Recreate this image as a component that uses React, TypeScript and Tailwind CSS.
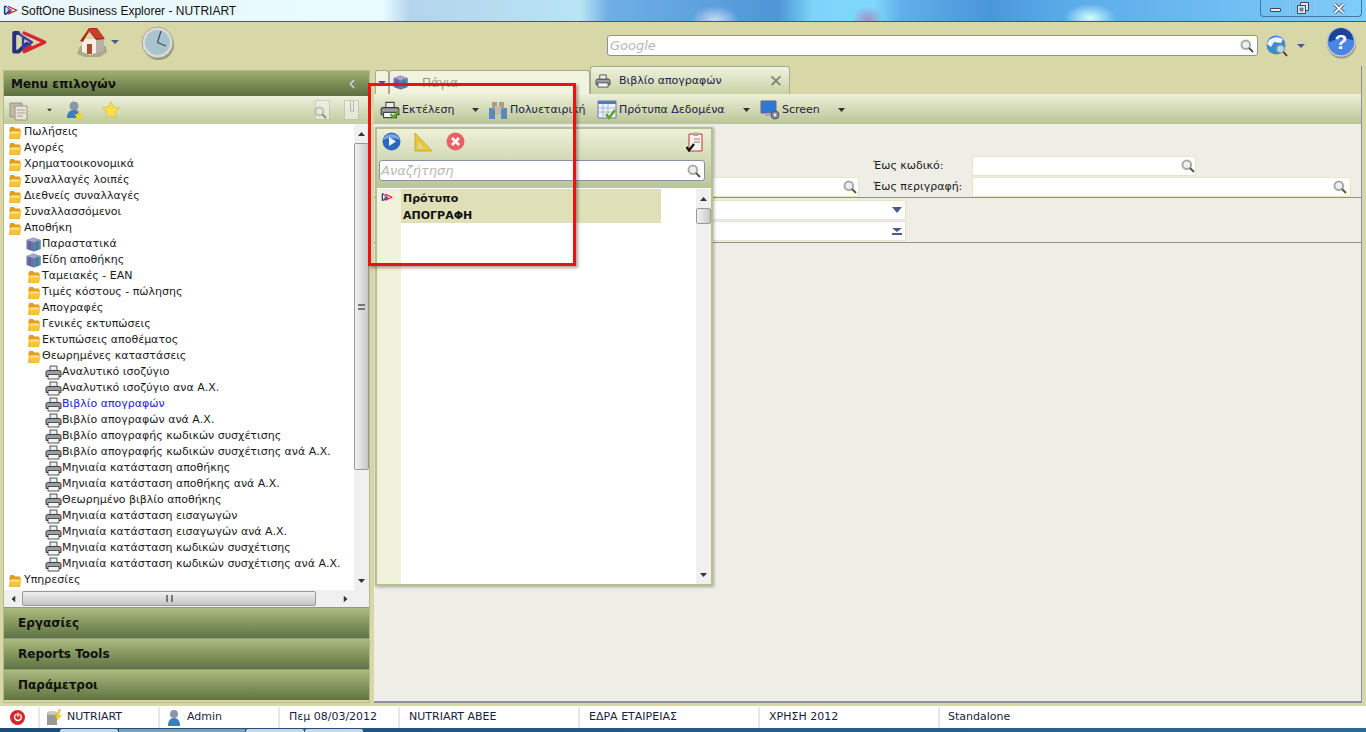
import { ChevronLeft } from "lucide-react";

const menuTop = ["Πωλήσεις", "Αγορές", "Χρηματοοικονομικά", "Συναλλαγές λοιπές", "Διεθνείς συναλλαγές", "Συναλλασσόμενοι", "Αποθήκη"];
const cubes = ["Παραστατικά", "Είδη αποθήκης"];
const folders = ["Ταμειακές - EAN", "Τιμές κόστους - πώλησης", "Απογραφές", "Γενικές εκτυπώσεις", "Εκτυπώσεις αποθέματος", "Θεωρημένες καταστάσεις"];
const reports = [
  "Αναλυτικό ισοζύγιο",
  "Αναλυτικό ισοζύγιο ανα Α.Χ.",
  "Βιβλίο απογραφών",
  "Βιβλίο απογραφών ανά Α.Χ.",
  "Βιβλίο απογραφής κωδικών συσχέτισης",
  "Βιβλίο απογραφής κωδικών συσχέτισης ανά Α.Χ.",
  "Μηνιαία κατάσταση αποθήκης",
  "Μηνιαία κατάσταση αποθήκης ανά Α.Χ.",
  "Θεωρημένο βιβλίο αποθήκης",
  "Μηνιαία κατάσταση εισαγωγών",
  "Μηνιαία κατάσταση εισαγωγών ανά Α.Χ.",
  "Μηνιαία κατάσταση κωδικών συσχέτισης",
  "Μηνιαία κατάσταση κωδικών συσχέτισης ανά Α.Χ.",
];

function Logo({ size = 38 }: { size?: number }) {
  return (
    <svg width={size} height={size * 0.7} viewBox="0 0 38 27" fill="none" className="shrink-0">
      <path d="M4 4 V23 H8 L17 15 M8 4 H4" stroke="#25307f" strokeWidth="4" strokeLinejoin="round" strokeLinecap="round" />
      <path d="M14 4 L35 13.5 L14 23 L20 17" stroke="#d8252e" strokeWidth="3.4" strokeLinejoin="round" strokeLinecap="round" />
      <path d="M8 4 L14 9 M13 8 L22 13.5 L13 19 Z" stroke="#3440a4" strokeWidth="2.4" strokeLinejoin="round" />
    </svg>
  );
}

function Folder() {
  return (
    <svg width="12" height="13" viewBox="0 0 12 13" className="shrink-0">
      <path d="M0.5 3 L1.5 1 H5 L6 2.5 H11 V6 H0.5 Z" fill="#e09c14" />
      <path d="M0.3 12.5 L1.5 4.5 H11.8 L10.8 12.5 Z" fill="#fcc430" stroke="#e0a018" strokeWidth="0.6" />
      <path d="M1.6 6 H11.4 L11.2 7.5 H1.4 Z" fill="#ffe58a" />
    </svg>
  );
}

function Cube() {
  return (
    <svg width="15" height="15" viewBox="0 0 15 15" className="shrink-0">
      <path d="M7.5 0.5 L14.5 3 V12 L7.5 14.5 L0.5 12 V3 Z" fill="#6e6fa8" />
      <path d="M8 5.5 L14.5 3 V12 L8 14.5 Z" fill="#4f8ca8" />
      <path d="M7.5 0.5 L14.5 3 L7.5 5.5 L0.5 3 Z" fill="#a5a2d2" />
      <path d="M4 4 V13 M11 4 V13" stroke="#3f4a78" strokeWidth="0.7" />
    </svg>
  );
}

function Printer({ check = false, size = 17 }: { check?: boolean; size?: number }) {
  return (
    <svg width={size} height={size - 2} viewBox="0 0 17 15" className="shrink-0">
      <path d="M5 1 H12 V6 H5 Z" fill="#ececec" stroke="#444" strokeWidth="0.9" />
      <path d="M1 7 Q1 5.5 3 5.5 H14 Q16 5.5 16 7 V11.5 H1 Z" fill="#9a9ea4" stroke="#333" strokeWidth="0.9" />
      <path d="M3 9.5 H14 V14 H3 Z" fill="#f4f4f4" stroke="#444" strokeWidth="0.9" />
      {check && <path d="M9 11 L11.5 13.5 L16 8" stroke="#58a818" strokeWidth="2.2" fill="none" />}
    </svg>
  );
}

function Mag({ size = 14 }: { size?: number }) {
  return (
    <svg width={size} height={size} viewBox="0 0 14 14" className="shrink-0">
      <circle cx="5.8" cy="5.8" r="4.3" fill="#eef0ee" stroke="#a8aaa8" strokeWidth="2" />
      <path d="M9 9 L13 13" stroke="#555" strokeWidth="2" />
    </svg>
  );
}

function Caret({ className = "" }: { className?: string }) {
  return (
    <svg width="7" height="4" viewBox="0 0 7 4" className={className}>
      <path d="M0 0 H7 L3.5 4 Z" fill="#333" />
    </svg>
  );
}

function House() {
  return (
    <svg width="32" height="32" viewBox="0 0 32 32">
      <path d="M1 28 L9 31 H24 L31 26 L30 20 H4 Z" fill="#85856f" opacity="0.55" />
      <path d="M6 13 H20 V27 L14 29 L6 26 Z" fill="#f4f0e6" />
      <path d="M20 12 L28 12 V24 L20 28 Z" fill="#b4b2a6" />
      <path d="M4 15 L13 2 H21 L29 13 L20 14 L13 5 L7 16 Z" fill="#a82c1c" />
      <path d="M9 12 L14 3 H21 L28 12 H20 L14 5 Z" fill="#c8402c" />
      <path d="M11 18 H16 V28 H11 Z" fill="#b0482a" />
    </svg>
  );
}

function Clock() {
  return (
    <svg width="34" height="34" viewBox="0 0 34 34">
      <circle cx="17.5" cy="18.5" r="15.5" fill="#55584c" opacity="0.5" />
      <circle cx="16.5" cy="16.5" r="15.5" fill="#dcdcd4" stroke="#a5a69a" />
      <circle cx="16.5" cy="16.5" r="12.5" fill="#a9c4cf" />
      <path d="M16.5 16.5 L20 5 M16.5 16.5 L25 20" stroke="#3c4c55" strokeWidth="1.2" />
    </svg>
  );
}

function Globe() {
  return (
    <svg width="22" height="22" viewBox="0 0 22 22">
      <circle cx="10" cy="10" r="9.5" fill="#3f8ad4" />
      <path d="M3 5 Q10 0 17 4 L15 8 L8 7 L5 12 L1 9 Z" fill="#eef4f8" />
      <circle cx="14.5" cy="14" r="4" fill="#b9d4e8" stroke="#889" />
      <path d="M17.5 17 L21 21" stroke="#333" strokeWidth="1.8" />
    </svg>
  );
}

function Help() {
  return (
    <svg width="30" height="32" viewBox="0 0 30 32">
      <circle cx="15.5" cy="17" r="14.5" fill="#55584c" opacity="0.5" />
      <circle cx="15" cy="15" r="14" fill="#4a84e4" stroke="#c4c6c4" strokeWidth="1.6" />
      <path d="M3 13 A12 12 0 0 1 27 13 Q15 9 3 15 Z" fill="#1c449c" />
      <text x="15" y="22" textAnchor="middle" fontSize="21" fontWeight="700" fontFamily="Liberation Sans" fill="#fff">?</text>
    </svg>
  );
}

function Row({ indent, icon, label, color = "text-[#1a1a1a]" }: { indent: string; icon: React.ReactNode; label: string; color?: string }) {
  return (
    <div className={`flex h-4 items-center whitespace-nowrap ${indent} ${color}`}>
      {icon}
      <span>{label}</span>
    </div>
  );
}

function Field({ w, children }: { w: string; children?: React.ReactNode }) {
  return <div className={`flex h-5 shrink-0 items-center justify-end border border-[#e6e6c4] bg-white ${w}`}>{children}</div>;
}

function ScrollV({ grip = false }: { grip?: boolean }) {
  return (
    <div className="flex w-[15px] shrink-0 flex-col items-center bg-[#f0f0f0]">
      <div className="flex h-[19px] items-center"><Caret className="rotate-180" /></div>
      {grip ? (
        <div className="flex h-[327px] w-[15px] items-center justify-center rounded-[2px] border border-[#999] bg-gradient-to-r from-[#f2f2f2] to-[#c8c8c8]">
          <div className="h-[6px] w-[7px] border-y-2 border-[#777]" />
        </div>
      ) : (
        <div className="h-[16px] w-[15px] rounded-[2px] border border-[#999] bg-gradient-to-r from-[#f2f2f2] to-[#c8c8c8]" />
      )}
      <div className="flex-1" />
      <div className="flex h-[19px] items-center"><Caret /></div>
    </div>
  );
}

function Section({ label }: { label: string }) {
  return (
    <div className="flex h-[31px] items-center border-t border-[#8f9a86] bg-gradient-to-b from-[#adbb80] to-[#5f7440] pl-[14px] text-[12px] font-bold text-[#101010]">
      {label}
    </div>
  );
}

function StatusCell({ w, icon, label }: { w: string; icon?: React.ReactNode; label: string }) {
  return (
    <div className={`flex h-full items-center border-r-2 border-[#e6e6ec] pl-[5px] ${w}`}>
      {icon}
      <span className="whitespace-nowrap pl-[4px] text-[#1a1a40]">{label}</span>
    </div>
  );
}

function ToolItem({ icon, label, caret, w, caretGap = "mr-[3px]" }: { icon: React.ReactNode; label: string; caret?: boolean; w: string; caretGap?: string }) {
  return (
    <div className={`flex items-center whitespace-nowrap ${w}`}>
      {icon}
      <span className="pl-[2px] text-[#20204a]">{label}</span>
      {caret && <Caret className={`ml-auto ${caretGap}`} />}
    </div>
  );
}

export default function App() {
  return (
    <div className="relative flex h-[732px] w-[1366px] flex-col overflow-hidden bg-[#d8d7a8] text-[11px] font-['DejaVu_Sans',sans-serif] text-[#1a1a1a]">
      {/* title bar */}
      <div className="flex h-[22px] shrink-0 items-center border-b border-[#555] bg-[radial-gradient(ellipse_26px_14px_at_1090px_18px,#d0ffff,transparent),radial-gradient(ellipse_24px_14px_at_715px_20px,#c8d8f8,transparent),radial-gradient(ellipse_16px_14px_at_868px_20px,#a090c8,transparent),linear-gradient(to_right,#eaf6fb_0%,#e8fcff_28%,#b4d4ec_30%,#b8e4f4_42.5%,#70aee6_44.5%,#4f96d6_57%,#7cd4fa_59.5%,#80d8fc_64%,#60aeea_66%,#4a96da_72.5%,#5aaae8_77.6%,#80ccfa_100%)] pl-[3px]">
        <Logo size={15} />
        <span className="pl-[3px] font-['Liberation_Sans',sans-serif] text-[12px] text-[#111]">SoftOne Business Explorer - NUTRIART</span>
        <div className="ml-auto mr-[4px] flex h-[17px] w-[102px] -translate-y-[2px] items-center rounded-b-[4px] border border-t-0 border-[#3f78a8]">
          <div className="flex h-full w-[29px] items-center justify-center border-r border-[#9cc4e4]">
            <div className="mt-[3px] h-[4px] w-[11px] rounded-[1px] border border-[#445] bg-[#e8eef4]" />
          </div>
          <div className="flex h-full w-[26px] items-center justify-center border-r border-[#9cc4e4]">
            <svg width="12" height="12" viewBox="0 0 12 12">
              <path d="M3.5 0.5 H11.5 V8.5 H8.5 V3.5 H3.5 Z" fill="#dce8f4" stroke="#445" />
              <path d="M0.5 3.5 H8.5 V11.5 H0.5 Z" fill="#dce8f4" stroke="#445" />
              <path d="M3 6 H6 V9 H3 Z" fill="#6ca8d8" stroke="#445" strokeWidth="0.6" />
            </svg>
          </div>
          <div className="flex flex-1 justify-center">
            <svg width="12" height="11" viewBox="0 0 12 11">
              <path d="M1.5 1 L10.5 10 M10.5 1 L1.5 10" stroke="#445" strokeWidth="3.4" />
              <path d="M1.5 1 L10.5 10 M10.5 1 L1.5 10" stroke="#f0f4f8" strokeWidth="1.8" />
            </svg>
          </div>
        </div>
      </div>

      {/* top band */}
      <div className="flex h-[44px] shrink-0 items-start pl-[10px]">
        <div className="pt-[7px]"><Logo size={38} /></div>
        <div className="flex items-center pl-[28px] pt-[4px]">
          <House />
          <svg width="8" height="4" viewBox="0 0 8 4" className="ml-[3px]"><path d="M0 0 H8 L4 4 Z" fill="#4c5c88" /></svg>
        </div>
        <div className="pl-[22px] pt-[4px]"><Clock /></div>
        <div className="ml-[432px] mt-[13px] flex h-[21px] w-[651px] items-center justify-between rounded-[3px] border border-[#8a90a4] bg-white pl-[2px] pr-[3px]">
          <span className="text-[13px] italic text-[#b8b8b8]">Google</span>
          <Mag />
        </div>
        <div className="pl-[8px] pt-[13px]"><Globe /></div>
        <svg width="8" height="4" viewBox="0 0 8 4" className="ml-[9px] mt-[22px]"><path d="M0 0 H8 L4 4 Z" fill="#4c5c88" /></svg>
        <div className="pl-[21px] pt-[5px]"><Help /></div>
      </div>

      {/* main */}
      <div className="flex h-[640px] shrink-0">
        {/* left panel */}
        <div className="ml-[3px] mt-[4px] flex h-[633px] w-[367px] shrink-0 flex-col border border-[#b5b98c]">
          <div className="flex h-[25px] shrink-0 items-center justify-between bg-gradient-to-b from-[#9eb070] to-[#5d6f40] pl-[7px] pr-[10px] text-[12px] font-bold text-[#101010]">
            <span>Menu επιλογών</span>
            <ChevronLeft size={14} strokeWidth={2.5} className="text-[#d0d8f0]" />
          </div>
          <div className="flex h-[28px] shrink-0 items-center bg-gradient-to-b from-[#eef0dc] to-[#bfcb9c] pl-[5px] pr-[10px]">
            <svg width="20" height="21" viewBox="0 0 20 21">
              <path d="M1 3 H13 V17 H1 Z" fill="#c6b6a6" stroke="#998" />
              <path d="M6 6 H18 V20 H6 Z" fill="#e8e4dc" stroke="#998" />
              <path d="M8 10 H16 M8 13 H16 M8 16 H14" stroke="#b09a8a" />
            </svg>
            <Caret className="ml-[17px] scale-75" />
            <svg width="18" height="20" viewBox="0 0 18 20" className="ml-[13px]">
              <circle cx="8" cy="6" r="4.5" fill="#8a97a8" />
              <path d="M1 18 Q1 10 8 10 Q13 10 14 14 L12 18 Z" fill="#3a7ec0" />
              <path d="M13 11 L14.5 14 L18 14.5 L15.5 17 L16 20 L13 18.5 L10 20 L10.5 17 L8.5 14.5 L11.5 14 Z" fill="#f0d040" />
            </svg>
            <svg width="18" height="18" viewBox="0 0 18 18" className="ml-[18px]">
              <path d="M9 0.5 L11.5 6.3 L17.6 6.8 L13 11 L14.4 17.2 L9 14 L3.6 17.2 L5 11 L0.4 6.8 L6.5 6.3 Z" fill="#f8e048" stroke="#d8b840" strokeWidth="0.7" />
            </svg>
            <div className="ml-auto flex items-center gap-[14px] opacity-60">
              <div className="relative h-[20px] w-[15px] border border-[#bbb] bg-[#f4f4f0]">
                <div className="absolute -left-[2px] bottom-0"><Mag size={13} /></div>
              </div>
              <div className="flex h-[20px] w-[15px] justify-center border border-[#bbb] bg-[#f4f4f0]">
                <div className="h-[11px] w-[4px] rounded-b-[2px] border border-t-0 border-[#999]" />
              </div>
            </div>
          </div>

          {/* tree */}
          <div className="flex h-[466px] shrink-0 bg-white">
            <div className="flex-1 overflow-hidden pl-[5px] text-[11px]">
              {menuTop.map((m) => (
                <Row key={m} indent="pl-[0px]" icon={<span className="pr-[3px]"><Folder /></span>} label={m} />
              ))}
              {cubes.map((m) => (
                <Row key={m} indent="pl-[17px]" icon={<span className="pr-[1px]"><Cube /></span>} label={m} />
              ))}
              {folders.map((m) => (
                <Row key={m} indent="pl-[19px]" icon={<span className="pr-[2px]"><Folder /></span>} label={m} />
              ))}
              {reports.map((m) => (
                <Row
                  key={m}
                  indent="pl-[36px]"
                  icon={<Printer />}
                  label={m}
                  color={m === "Βιβλίο απογραφών" ? "text-[#2020e0]" : "text-[#1a1a1a]"}
                />
              ))}
              <Row indent="pl-[0px]" icon={<span className="pr-[3px]"><Folder /></span>} label="Υπηρεσίες" />
            </div>
            <ScrollV grip />
          </div>
          <div className="flex h-[17px] shrink-0 items-center bg-[#f0f0f0]">
            <div className="flex w-[18px] justify-center"><Caret className="rotate-90" /></div>
            <div className="flex h-[15px] w-[294px] items-center justify-center rounded-[2px] border border-[#999] bg-gradient-to-b from-[#f0f0f0] to-[#c4c4c4]">
              <div className="h-[7px] w-[7px] border-x-2 border-[#777]" />
            </div>
            <div className="ml-[24px] flex w-[10px] justify-center"><Caret className="-rotate-90" /></div>
          </div>
          <Section label="Εργασίες" />
          <Section label="Reports Tools" />
          <Section label="Παράμετροι" />
        </div>

        {/* right panel */}
        <div className="ml-[4px] flex h-[637px] w-[988px] shrink-0 flex-col border-b-2 border-r border-[#8a90a4]">
          <div className="flex h-[28px] shrink-0 items-end pl-[1px]">
            <div className="flex h-[24px] w-[14px] items-center justify-center rounded-t-[3px] border border-b-0 border-[#a8ac90] bg-[#f2f3df]">
              <svg width="8" height="4" viewBox="0 0 8 4"><path d="M0 0 H8 L4 4 Z" fill="#4c5c88" /></svg>
            </div>
            <div className="flex h-[24px] w-[201px] items-center rounded-t-[3px] border border-b-0 border-[#a8ac90] bg-[#f2f3df] pl-[3px] text-[12px] text-[#9a9a90]">
              <Cube />
              <span className="pl-[14px]">Πάγια</span>
            </div>
            <div className="flex h-[28px] w-[200px] items-center rounded-t-[3px] border border-b-0 border-[#a8ac90] bg-gradient-to-b from-[#f0f2de] to-[#c9d2a6] pl-[4px] pr-[6px] pt-px text-[#20204a]">
              <Printer size={16} />
              <span className="pl-[8px]">Βιβλίο απογραφών</span>
              <span className="ml-auto text-[17px] leading-none text-[#7d8078]">✕</span>
            </div>
          </div>
          <div className="flex h-[30px] shrink-0 items-center bg-gradient-to-b from-[#eef0d8] to-[#b9c596] pl-[6px] pt-[2px]">
            <ToolItem w="w-[108px]" icon={<Printer check size={20} />} label="Εκτέλεση" caret caretGap="mr-[9px]" />
            <ToolItem
              w="w-[109px]"
              icon={
                <svg width="20" height="20" viewBox="0 0 20 20" className="shrink-0">
                  <path d="M1 19 V8 H7 V19 Z M13 19 V8 H19 V19 Z" fill="#5a88c0" />
                  <path d="M4 9 V2 H9 V9 Z M11 9 V2 H16 V9 Z" fill="#a89a8c" />
                  <path d="M7 6 H13 V15 H7 Z" fill="#c8b8a8" />
                </svg>
              }
              label="Πολυεταιρική"
            />
            <ToolItem
              w="w-[163px]"
              icon={
                <svg width="20" height="20" viewBox="0 0 20 20" className="shrink-0">
                  <path d="M1 1 H19 V18 H1 Z" fill="#eef2fa" stroke="#6c7ea8" />
                  <path d="M1 4 H19 V1 H1 Z" fill="#5a78b8" />
                  <path d="M1 8 H19 M1 12 H19 M6 4 V18 M11 4 V18" stroke="#9aaace" strokeWidth="0.8" />
                  <path d="M9 14 L12 18 L18 10" stroke="#58a818" strokeWidth="2.4" fill="none" />
                </svg>
              }
              label="Πρότυπα Δεδομένα"
              caret
              caretGap="mr-[10px]"
            />
            <ToolItem
              w="w-[85px]"
              icon={
                <svg width="20" height="20" viewBox="0 0 20 20" className="shrink-0">
                  <path d="M1 1 H16 V13 H1 Z" fill="#2a78d8" stroke="#667" />
                  <path d="M5 13 H12 V16 H5 Z" fill="#aab" />
                  <circle cx="15" cy="15" r="4" fill="#889" stroke="#556" />
                  <circle cx="15" cy="15" r="1.4" fill="#eee" />
                </svg>
              }
              label="Screen"
              caret
              caretGap="mr-0"
            />
          </div>

          {/* form */}
          <div className="flex-1 bg-[#eeede6] pt-[32px]">
            <div className="flex h-5 items-center pl-[499px]">
              <span className="w-[99px]">Έως κωδικό:</span>
              <Field w="w-[224px]"><Mag /></Field>
            </div>
            <div className="mt-px box-content flex h-5 items-center border-b border-[#8f9196] pl-[225px]">
              <Field w="w-[260px]"><span className="pr-px"><Mag /></span></Field>
              <span className="w-[113px] shrink-0 whitespace-nowrap pl-[14px]">Έως περιγραφή:</span>
              <Field w="w-[379px]"><span className="pr-[3px]"><Mag /></span></Field>
            </div>
            <div className="mt-[2px] flex flex-col gap-px border-b border-[#8f9196] pb-px pl-[225px]">
              <Field w="w-[307px]">
                <svg width="10" height="6" viewBox="0 0 10 6" className="mr-[3px]"><path d="M0 0 H10 L5 6 Z" fill="#4c5c88" /></svg>
              </Field>
              <Field w="w-[307px]">
                <svg width="10" height="7" viewBox="0 0 10 7" className="mr-[3px]"><path d="M0 0 H10 L5 4 Z M0 5 H10 V7 H0 Z" fill="#4c5c88" /></svg>
              </Field>
            </div>
          </div>
        </div>
      </div>

      {/* status bar */}
      <div className="flex h-[22px] shrink-0 items-center bg-white pt-px">
        <div className="flex h-full w-[40px] items-center justify-center border-r-2 border-[#e6e6ec] pr-[3px]">
          <div className="flex h-[15px] w-[15px] items-center justify-center rounded-full bg-[#d8242c] text-[10px] font-bold leading-none text-white">⏻</div>
        </div>
        <StatusCell
          w="w-[120px]"
          label="NUTRIART"
          icon={
            <svg width="18" height="18" viewBox="0 0 18 18" className="shrink-0">
              <path d="M2 4 H12 V16 H2 Z" fill="#9a9a8e" />
              <ellipse cx="7" cy="4" rx="5" ry="2" fill="#c8c8bc" />
              <path d="M14 0 L10 8 H13 L11 13 L17 6 H14 L16 0 Z" fill="#f0c828" />
            </svg>
          }
        />
        <StatusCell
          w="w-[120px]"
          label="Admin"
          icon={
            <svg width="18" height="18" viewBox="0 0 18 18" className="shrink-0">
              <circle cx="9" cy="5" r="4" fill="#8a97a8" />
              <path d="M3 17 Q3 9 9 9 Q15 9 15 17 Z" fill="#3a7ec0" />
            </svg>
          }
        />
        <StatusCell w="w-[120px] pl-[4px]" label="Πεμ 08/03/2012" />
        <StatusCell w="w-[180px] pl-[4px]" label="NUTRIART ABEE" />
        <StatusCell w="w-[180px] pl-[4px]" label="ΕΔΡΑ ΕΤΑΙΡΕΙΑΣ" />
        <StatusCell w="w-[180px] pl-[4px]" label="ΧΡΗΣΗ 2012" />
        <div className="flex-1 whitespace-nowrap pl-[8px] text-[#1a1a40]">Standalone</div>
      </div>
      <div className="flex flex-1 items-end gap-[1px] bg-gradient-to-r from-[#1c4c78] to-[#2a6898] pl-[60px]">
        <div className="h-[3px] w-[58px] rounded-t-[2px] bg-[#c8d8e4]" />
        <div className="h-[3px] w-[126px] bg-[#7aa0bc]" />
        <div className="h-[3px] w-[58px] rounded-t-[2px] bg-[#c8d8e4]" />
        <div className="h-[3px] w-[58px] rounded-t-[2px] bg-[#c8d8e4]" />
      </div>

      {/* popup */}
      <div className="absolute left-[375px] top-[127px] flex h-[459px] w-[338px] flex-col border-2 border-[#b4c092] shadow-[1px_1px_3px_rgba(0,0,0,0.3)]">
        <div className="flex h-[59px] shrink-0 flex-col bg-gradient-to-b from-[#eef0d8] to-[#b9c596] pl-[2px] pr-[6px]">
          <div className="flex h-[31px] items-start pl-[3px] pr-[1px] pt-[3px]">
            <svg width="19" height="19" viewBox="0 0 19 19">
              <circle cx="9.5" cy="9.5" r="9" fill="#2a68c0" />
              <path d="M1 8 A9 9 0 0 1 18 8 Q9.5 4 1 8 Z" fill="#79a8e0" />
              <path d="M7 5 L14 9.5 L7 14 Z" fill="#f0f6ff" />
            </svg>
            <svg width="19" height="20" viewBox="0 0 19 20" className="ml-[13px]">
              <path d="M1 1 L18 19 H1 Z" fill="#ecc838" stroke="#b89820" strokeWidth="0.7" />
              <path d="M4 10 L10 16.5 H4 Z" fill="#d8d8b0" />
            </svg>
            <svg width="19" height="19" viewBox="0 0 19 19" className="ml-[13px]">
              <circle cx="9.5" cy="9.5" r="9" fill="#e86264" />
              <path d="M6 6 L13 13 M13 6 L6 13" stroke="#fff" strokeWidth="2.6" />
            </svg>
            <svg width="18" height="20" viewBox="0 0 18 20" className="ml-auto">
              <path d="M3 2 H16 V19 H3 Z" fill="#f8f4ec" stroke="#c03030" />
              <path d="M7 0.5 H12 V4 H7 Z" fill="#aaa" />
              <path d="M8 7 H14 M8 10 H14" stroke="#b07070" />
              <path d="M0.5 15 L3 18.5 L8 12" stroke="#111" strokeWidth="2.2" fill="none" />
            </svg>
          </div>
          <div className="flex h-[21px] items-center justify-between rounded-[3px] border border-[#8a90a4] bg-white pl-[1px] pr-[3px]">
            <span className="text-[13px] italic text-[#b8b8b8]">Αναζήτηση</span>
            <Mag />
          </div>
        </div>
        <div className="flex min-h-0 flex-1 border-t border-white bg-white">
          <div className="w-[24px] shrink-0 bg-[#f0f2dc] pl-[4px] pt-[4px]">
            <Logo size={12} />
          </div>
          <div className="flex-1">
            <div className="h-[34px] w-[260px] bg-[#e0e0b8] pl-[2px] pt-px font-bold leading-[17px] text-[#111]">
              <div>Πρότυπο</div>
              <div>ΑΠΟΓΡΑΦΗ</div>
            </div>
          </div>
          <ScrollV />
        </div>
      </div>

      {/* red highlight */}
      <div className="absolute left-[368px] top-[83px] h-[183px] w-[208px] border-[3px] border-[#ee1111] shadow-[2px_2px_3px_rgba(0,0,0,0.35)]" />
    </div>
  );
}
